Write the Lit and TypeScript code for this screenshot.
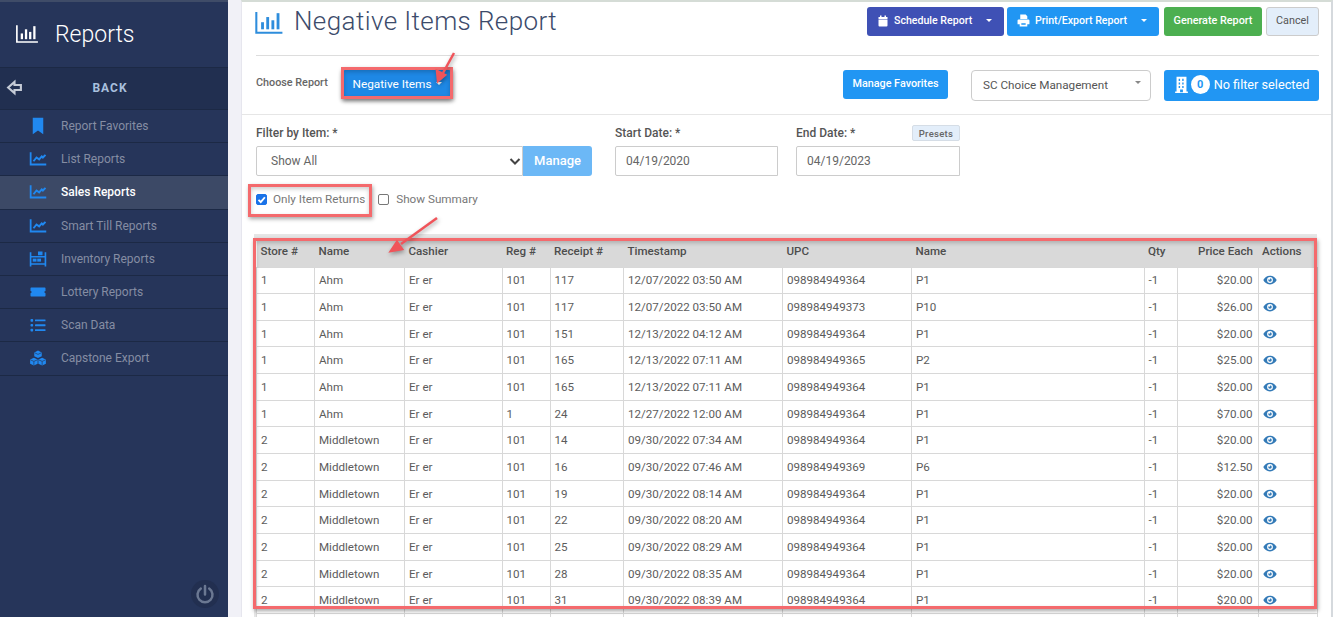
import { LitElement, html, css, svg } from 'lit';
import { customElement } from 'lit/decorators.js';

const bars = svg`<path d="M1 3h1.600v15.400H22V20H1z"/><rect x="5.500" y="11" width="2.200" height="5.500"/><rect x="9.500" y="7" width="2.200" height="9.500"/><rect x="13.500" y="9.500" width="2.200" height="7"/><rect x="17.500" y="4" width="2.200" height="12.500"/>`;

const icons: Record<string, unknown> = {
  bookmark: svg`<path d="M5 1h14v22l-7-5-7 5z"/>`,
  area: svg`<path d="M1 3h2.400v15H23v2.500H1z"/><path d="M6 15l4-5 3.500 2.500L17 8.500l1.500 1.500L22 6.500" fill="none" stroke="currentColor" stroke-width="2.600"/>`,
  shelf: svg`<path d="M1 3h2.200v5h17.600V3H23v19h-2.200v-2.500H3.200V22H1zm2.200 7v7.500h17.600V10z" fill-rule="evenodd"/><rect x="12" y="2" width="6" height="5"/><rect x="5" y="11.500" width="5" height="4"/><rect x="11" y="11.500" width="5" height="4"/>`,
  ticket: svg`<path d="M3 6h18a1 1 0 0 1 1 1v3.500a1.500 1.500 0 0 0 0 3V17a1 1 0 0 1-1 1H3a1 1 0 0 1-1-1v-3.500a1.500 1.500 0 0 0 0-3V7a1 1 0 0 1 1-1z"/>`,
  list: svg`<rect x="2" y="4" width="3.500" height="3.500" rx="1"/><rect x="2" y="10.500" width="3.500" height="3.500" rx="1"/><rect x="2" y="17" width="3.500" height="3.500" rx="1"/><rect x="8" y="4.500" width="14" height="2.500" rx=".5"/><rect x="8" y="11" width="14" height="2.500" rx=".5"/><rect x="8" y="17.500" width="14" height="2.500" rx=".5"/>`,
  cubes: svg`<path d="M12 2l5 2.500v5L12 12 7 9.500v-5z"/><path d="M6.500 11.500l5 2.500v5.500l-5 2.500-5-2.500V14z"/><path d="M17.500 11.500l5 2.500v5.500l-5 2.500-5-2.500V14z"/><path d="M7.500 5l4.500 2.200L16.500 5M6.500 16.500v5M17.500 16.500v5M2 14.500l4.500 2 4.500-2M13 14.500l4.500 2 4.500-2" fill="none" stroke="#26355a" stroke-width=".9"/>`,
};

const menu = [
  ['Report Favorites', 'bookmark'],
  ['List Reports', 'area'],
  ['Sales Reports', 'area'],
  ['Smart Till Reports', 'area'],
  ['Inventory Reports', 'shelf'],
  ['Lottery Reports', 'ticket'],
  ['Scan Data', 'list'],
  ['Capstone Export', 'cubes'],
];

// store, name, reg, receipt, timestamp, upc, item, price
const rows = [
  ['1', 'Ahm', '101', '117', '12/07/2022 03:50 AM', '098984949364', 'P1', '$20.00'],
  ['1', 'Ahm', '101', '117', '12/07/2022 03:50 AM', '098984949373', 'P10', '$26.00'],
  ['1', 'Ahm', '101', '151', '12/13/2022 04:12 AM', '098984949364', 'P1', '$20.00'],
  ['1', 'Ahm', '101', '165', '12/13/2022 07:11 AM', '098984949365', 'P2', '$25.00'],
  ['1', 'Ahm', '101', '165', '12/13/2022 07:11 AM', '098984949364', 'P1', '$20.00'],
  ['1', 'Ahm', '1', '24', '12/27/2022 12:00 AM', '098984949364', 'P1', '$70.00'],
  ['2', 'Middletown', '101', '14', '09/30/2022 07:34 AM', '098984949364', 'P1', '$20.00'],
  ['2', 'Middletown', '101', '16', '09/30/2022 07:46 AM', '098984949369', 'P6', '$12.50'],
  ['2', 'Middletown', '101', '19', '09/30/2022 08:14 AM', '098984949364', 'P1', '$20.00'],
  ['2', 'Middletown', '101', '22', '09/30/2022 08:20 AM', '098984949364', 'P1', '$20.00'],
  ['2', 'Middletown', '101', '25', '09/30/2022 08:29 AM', '098984949364', 'P1', '$20.00'],
  ['2', 'Middletown', '101', '28', '09/30/2022 08:35 AM', '098984949364', 'P1', '$20.00'],
  ['2', 'Middletown', '101', '31', '09/30/2022 08:39 AM', '098984949364', 'P1', '$20.00'],
];

const colWidths = [58, 90, 97.500, 48, 73.500, 159, 129, 232.500, 33, 81, 59];

@customElement('app-root')
export class AppRoot extends LitElement {
  static styles = css`
    :host {
      display: flex;
      height: 617px;
      overflow: hidden;
      position: relative;
      background: #fff;
      font-family: Roboto, "Open Sans", sans-serif;
      font-size: 12px;
      color: #555;
    }
    svg { fill: currentColor; display: block; }

    .sidebar {
      width: 228px;
      flex: none;
      background: #26355a;
      border-top: 2px solid #3f4c68;
      box-sizing: border-box;
      position: relative;
    }
    .brand {
      height: 65px;
      display: flex;
      align-items: center;
      gap: 15px;
      padding-left: 15px;
      color: #fff;
      font-size: 23px;
      font-weight: 300;
      box-sizing: border-box;
    }
    .back {
      height: 43px;
      background: #212f50;
      border-top: 1px solid #1c2945;
      border-bottom: 1px solid #1c2945;
      display: flex;
      align-items: center;
      box-sizing: border-box;
      position: relative;
      justify-content: center;
      padding: 0 8px 2px 0;
      font-weight: 700;
      letter-spacing: 1px;
      color: #a9c0de;
    }
    .back svg { position: absolute; left: 6px; top: 11px; color: #c5cbd6; }
    .item {
      height: 33.200px;
      display: flex;
      align-items: center;
      border-bottom: 1px solid #1c2945;
      box-sizing: border-box;
      color: #858da3;
    }
    .item .ic {
      width: 61px;
      display: flex;
      justify-content: center;
      padding-left: 14px;
      box-sizing: border-box;
      color: #2088f0;
    }
    .item.active { background: #3c4966; color: #fff; font-weight: 500; }
    .power {
      position: absolute;
      left: 191px;
      bottom: 9px;
      width: 28px;
      height: 28px;
      border-radius: 50%;
      background: #222f50;
      color: #6b7892;
      display: flex;
      align-items: center;
      justify-content: center;
    }

    .gutter { width: 13px; flex: none; background: #f1f1f7; }
    .panel {
      width: 1092px;
      flex: none;
      box-sizing: border-box;
      border-top: 2px solid #d5dcd6;
      border-right: 2px solid #d5d9dd;
      border-left: 1px solid #e6e6ee;
      background: #fff;
    }
    .head {
      height: 53px;
      margin: 0 12px 0 14px;
      border-bottom: 1px solid #ddd;
      display: flex;
      box-sizing: content-box;
    }
    .title {
      display: flex;
      align-items: flex-start;
      gap: 9px;
      flex: 1;
      font-size: 26px;
      font-weight: 300;
      color: #3c4b6b;
      line-height: 38px;
      letter-spacing: 0.4px;
    }
    .title svg { color: #2e8ddc; margin: 6px 0 0 -2px; }
    .actions { display: flex; align-items: flex-start; padding-top: 5px; }
    .btn {
      height: 29px;
      border-radius: 3px;
      color: #fff;
      background: #2196f3;
      display: flex;
      align-items: center;
      justify-content: center;
      box-sizing: border-box;
      font-size: 10.800px;
      font-weight: 500;
      padding-bottom: 2px;
    }
    .caret {
      width: 0;
      height: 0;
      border-left: 3.500px solid transparent;
      border-right: 3.500px solid transparent;
      border-top: 3.500px solid currentColor;
    }
    .schedule { width: 137px; background: #3f51b5; padding: 0 12px 2px 10px; gap: 5px; margin-right: 3px; font-size: 10.600px; }
    .print { width: 152px; padding: 0 12px 2px 10px; gap: 5px; margin-right: 5px; font-size: 10.600px; }
    .schedule span, .print span { flex: 1; }
    .generate { width: 98px; background: #4caf50; margin-right: 4px; }
    .cancel { width: 53px; background: #e3eefa; color: #555; border: 1px solid #ccc; font-weight: 400; }

    .choose {
      height: 59px;
      border-bottom: 1px solid #e6e6e6;
      padding: 14px 12px 0 14px;
      display: flex;
      align-items: flex-start;
      box-sizing: border-box;
    }
    .choose label { font-size: 10.800px; font-weight: 500; color: #666; width: 86px; padding-top: 6px; }
    .neg { width: 110px; gap: 4px; font-size: 11.800px; font-weight: 400; background: #1e88e5; box-shadow: 0 2px 4px rgba(0,0,0,.3); }
    .fav { width: 105px; margin-left: 391px; }
    .store {
      width: 180px;
      height: 31px;
      margin-left: 23px;
      border: 1px solid #ccc;
      border-radius: 4px;
      display: flex;
      align-items: center;
      justify-content: space-between;
      padding: 0 9px 1px 11px;
      box-sizing: border-box;
      color: #555;
      font-size: 11.700px;
      background: #fff;
    }
    .store .caret { color: #888; margin-bottom: 5px; }
    .nofilter { width: 155px; height: 31px; margin-left: 13px; font-size: 12.700px; font-weight: 400; gap: 2px; }
    .zero {
      width: 19px;
      height: 19px;
      border-radius: 50%;
      background: #fff;
      color: #2196f3;
      display: flex;
      align-items: center;
      justify-content: center;
      font-size: 11px;
      font-weight: 700;
      margin-right: 2px;
      padding-bottom: 1px;
      box-sizing: border-box;
    }

    .filters { display: flex; padding: 10px 14px 0; height: 60px; box-sizing: border-box; }
    .filters .lbl { font-weight: 500; color: #555; height: 21px; line-height: 17px; display: flex; justify-content: space-between; }
    .field {
      height: 30px;
      border: 1px solid #ccc;
      border-radius: 2px 0 0 2px;
      box-sizing: border-box;
      display: flex;
      align-items: center;
      padding: 0 10px 1px;
      color: #666;
      background: #fff;
    }
    .f-item { width: 359px; }
    .f-item .row { display: flex; }
    .f-item .field { width: 267px; padding-left: 14px; justify-content: space-between; padding-right: 1px; }
    .manage { width: 69px; height: 30px; background: #6cb8f6; border-radius: 0 3px 3px 0; font-size: 13px; }
    .f-start { width: 163px; margin-right: 18px; }
    .f-end { width: 164px; }
    .presets {
      width: 48px;
      height: 16px;
      border: 1px solid #d5dde6;
      background: #e3eefa;
      border-radius: 2px;
      display: flex;
      align-items: center;
      justify-content: center;
      font-size: 9.500px;
      color: #666;
      box-sizing: border-box;
      letter-spacing: 0.3px;
    }

    .checks { display: flex; align-items: center; height: 20px; padding: 14px 14px 0; color: #777; font-size: 11.700px; box-sizing: content-box; }
    .check {
      width: 11px;
      height: 11px;
      border: 1px solid #777;
      border-radius: 2px;
      box-sizing: border-box;
      margin-right: 7px;
      background: #fff;
    }
    .check.on { background: #1a73e8; border-color: #1a73e8; color: #fff; margin-right: 6px; }
    .checks span + .check { margin-left: 13px; }

    .wrap {
      margin: 25px 14px 0 12px;
      padding-top: 4px;
      background: #e6e6e6;
    }
    table {
      border-collapse: collapse;
      table-layout: fixed;
      width: 1060px;
      margin-left: 2px;
      background: #fff;
      font-size: 11.600px;
    }
    th {
      height: 29px;
      background: #d9d9d9;
      text-align: left;
      font-weight: 500;
      color: #4d4d4d;
      padding: 0 4px 2px;
      white-space: nowrap;
      box-sizing: border-box;
    }
    td {
      height: 26.670px;
      padding: 0 4px;
      border: 1px solid #d8d8d8;
      box-sizing: border-box;
      color: #5c5c5c;
      white-space: nowrap;
      background: #fff;
    }
    .num { text-align: right; padding-right: 5px; }
    th.num { padding-right: 5px; }
    td svg { color: #337ab7; }

    .mark {
      position: absolute;
      border: 3px solid #f46a6d;
      box-sizing: border-box;
      box-shadow: 1px 2px 4px rgba(0,0,0,.35), inset 0 2px 4px rgba(0,0,0,.2);
    }
    .m1 { left: 341px; top: 67px; width: 112px; height: 32px; }
    .m2 { left: 248px; top: 184px; width: 124px; height: 33px; }
    .m3 { left: 253px; top: 238px; width: 1064px; height: 371px; }
    .arrows { position: absolute; left: 0; top: 0; pointer-events: none; fill: none; }
    .arrows g { filter: drop-shadow(1px 2px 2px rgba(0,0,0,.35)); }
  `;

  private icon(d: unknown, size: number) {
    return html`<svg width=${size} height=${size} viewBox="0 0 24 24">${d}</svg>`;
  }

  render() {
    return html`
      <aside class="sidebar">
        <div class="brand">${this.icon(bars, 25)}<span>Reports</span></div>
        <div class="back">
          <svg width="17" height="17" viewBox="0 0 24 24"><path d="M3 12l9-8v4.500h9v7h-9V20z" fill="none" stroke="currentColor" stroke-width="3"/></svg>
          BACK
        </div>
        ${menu.map(
          ([label, ic]) => html`<div class="item ${label === 'Sales Reports' ? 'active' : ''}">
            <span class="ic">${this.icon(icons[ic], 18)}</span><span>${label}</span>
          </div>`
        )}
        <div class="power">
          <svg width="20" height="20" viewBox="0 0 24 24"><path d="M7 5.500a9 9 0 1 0 10 0M12 2.500v10" fill="none" stroke="currentColor" stroke-width="3" stroke-linecap="round"/></svg>
        </div>
      </aside>
      <div class="gutter"></div>
      <main class="panel">
        <div class="head">
          <div class="title">${this.icon(bars, 31)}<span>Negative Items Report</span></div>
          <div class="actions">
            <div class="btn schedule">
              <svg width="12" height="12" viewBox="0 0 24 24"><path d="M3 9h18v12a2 2 0 0 1-2 2H5a2 2 0 0 1-2-2zM3 4h3V1h3v3h6V1h3v3h3v4H3z"/></svg>
              <span>Schedule Report</span><i class="caret"></i>
            </div>
            <div class="btn print">
              <svg width="13" height="13" viewBox="0 0 24 24"><path d="M6 1h10l3 3v5H6zM3 10h18a2 2 0 0 1 2 2v7h-4v4H5v-4H1v-7a2 2 0 0 1 2-2zm5 7v3h8v-3z" fill-rule="evenodd"/></svg>
              <span>Print/Export Report</span><i class="caret"></i>
            </div>
            <div class="btn generate">Generate Report</div>
            <div class="btn cancel">Cancel</div>
          </div>
        </div>
        <div class="choose">
          <label>Choose Report</label>
          <div class="btn neg">Negative Items <i class="caret"></i></div>
          <div class="btn fav">Manage Favorites</div>
          <div class="store"><span>SC Choice Management</span><i class="caret"></i></div>
          <div class="btn nofilter">
            <svg width="15" height="17" viewBox="0 0 20 24"><path d="M3 1h14v21h2v2H1v-2h2zm3 3v3h2V4zm5 0v3h2V4zM6 9v3h2V9zm5 0v3h2V9zm-5 5v3h2v-3zm5 0v3h2v-3zm-3 5v4h4v-4z" fill-rule="evenodd"/></svg>
            <span class="zero">0</span>No filter selected
          </div>
        </div>
        <div class="filters">
          <div class="f-item">
            <div class="lbl">Filter by Item: *</div>
            <div class="row">
              <div class="field"><span>Show All</span>
                <svg width="12" height="12" viewBox="0 0 24 24"><path d="M3 8l9 9 9-9" fill="none" stroke="#444" stroke-width="4"/></svg>
              </div>
              <div class="btn manage">Manage</div>
            </div>
          </div>
          <div class="f-start">
            <div class="lbl">Start Date: *</div>
            <div class="field">04/19/2020</div>
          </div>
          <div class="f-end">
            <div class="lbl">End Date: * <span class="presets">Presets</span></div>
            <div class="field">04/19/2023</div>
          </div>
        </div>
        <div class="checks">
          <div class="check on">
            <svg width="9" height="9" viewBox="0 0 24 24"><path d="M4 13l6 6L21 6" fill="none" stroke="currentColor" stroke-width="5"/></svg>
          </div>
          <span>Only Item Returns</span>
          <div class="check"></div>
          <span>Show Summary</span>
        </div>
        <div class="wrap">
          <table>
            <colgroup>${colWidths.map((w) => html`<col style="width:${w}px" />`)}</colgroup>
            <thead>
              <tr>
                <th>Store #</th><th>Name</th><th>Cashier</th><th>Reg #</th><th>Receipt #</th><th>Timestamp</th>
                <th>UPC</th><th>Name</th><th>Qty</th><th class="num">Price Each</th><th>Actions</th>
              </tr>
            </thead>
            <tbody>
              ${rows.map(
                (r) => html`<tr>
                  <td>${r[0]}</td><td>${r[1]}</td><td>Er er</td><td>${r[2]}</td><td>${r[3]}</td>
                  <td>${r[4]}</td><td>${r[5]}</td><td>${r[6]}</td><td>-1</td>
                  <td class="num">${r[7]}</td>
                  <td>
                    <svg width="14" height="14" viewBox="0 0 24 24"><path d="M12 4.500c5.500 0 9.500 3.500 11.500 7.500-2 4-6 7.500-11.500 7.500S2.500 16 .5 12C2.500 8 6.500 4.500 12 4.500zM12 7a5 5 0 1 0 0 10 5 5 0 0 0 0-10zm0 2a3 3 0 1 1-3 3c0-.5.1-1 .3-1.400.3.500.8.800 1.400.800a1.700 1.700 0 0 0 1.300-2.400z" fill-rule="evenodd"/></svg>
                  </td>
                </tr>`
              )}
              <tr>${colWidths.map(() => html`<td></td>`)}</tr>
            </tbody>
          </table>
        </div>
      </main>
      <div class="mark m1"></div>
      <div class="mark m2"></div>
      <div class="mark m3"></div>
      <svg class="arrows" width="1339" height="617">
        <g stroke="#f0545a" stroke-width="2.500" fill="#f0545a">
          <path d="M454 53L443 73"/><path d="M438 81l-1-10 8 4z"/>
          <path d="M437 218L401 244"/><path d="M391 251l6-9 5 7z"/>
        </g>
      </svg>
    `;
  }
}
